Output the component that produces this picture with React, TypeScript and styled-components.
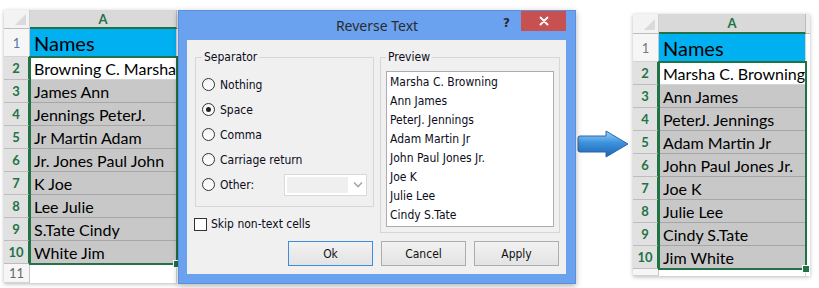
import React from 'react';
import styled, { createGlobalStyle, css } from 'styled-components';

const Global = createGlobalStyle`
  html, body { margin: 0; padding: 0; background: #fff; }
  body { width: 819px; height: 288px; overflow: hidden; font-family: "Liberation Sans", Arial, sans-serif; }
  * { box-sizing: border-box; }
`;

const Page = styled.div`
  display: flex;
  align-items: flex-start;
  width: 819px;
  height: 288px;
`;

/* ---------- Spreadsheet ---------- */

const SheetFrame = styled.div<{ $ml: number; $mt: number }>`
  display: flex;
  margin-left: ${p => p.$ml}px;
  margin-top: ${p => p.$mt}px;
  background: #fff;
  box-shadow: 0 1px 4px rgba(0, 0, 0, 0.28);
  font-family: Lato, "Open Sans", sans-serif;
`;

const HeadCol = styled.div`
  display: flex;
  flex-direction: column;
  width: 26px;
`;

const DataCol = styled.div`
  display: flex;
  flex-direction: column;
  width: 147px;
`;

const StripCol = styled.div<{ $w: number }>`
  display: flex;
  flex-direction: column;
  width: ${p => p.$w}px;
`;

const Corner = styled.div<{ $h: number }>`
  height: ${p => p.$h}px;
  background: #f3f3f3;
  border-right: 1px solid #cfcfcf;
  border-bottom: 1px solid #bdbdbd;
  display: flex;
  align-items: flex-end;
  justify-content: flex-end;
  padding: 0 3px 3px 0;
`;

const Tri = styled.div`
  width: 0;
  height: 0;
  border-left: 11px solid transparent;
  border-bottom: 11px solid #dadada;
`;

const RowNum = styled.div<{ $h: number; $sel?: boolean; $tone?: string }>`
  height: ${p => p.$h}px;
  display: flex;
  align-items: center;
  justify-content: center;
  font-size: 13px;
  border-right: 1px solid #c6c6c6;
  border-bottom: 1px solid #d4d4d4;
  background: #f6f6f6;
  color: ${p => p.$tone || '#666'};
  overflow: hidden;
  ${p =>
    p.$sel &&
    css`
      background: #e1e1e1;
      color: #217346;
      font-weight: 700;
      border-bottom-color: #bdbdbd;
      border-right: 2px solid #217346;
    `}
`;

const ColHead = styled.div<{ $h: number }>`
  height: ${p => p.$h}px;
  background: #d9d9d9;
  color: #217346;
  font-weight: 700;
  font-size: 13px;
  display: flex;
  align-items: center;
  justify-content: center;
  border-right: 1px solid #bdbdbd;
  border-bottom: 2px solid #217346;
`;

const StripHead = styled.div<{ $h: number }>`
  height: ${p => p.$h}px;
  background: #ececec;
  border-bottom: 1px solid #bdbdbd;
`;

const StripBody = styled.div`
  flex: 1;
  background: #fff;
`;

const TitleCell = styled.div`
  height: 28px;
  background: #00b0f0;
  color: #000;
  font-size: 20px;
  display: flex;
  align-items: center;
  padding-left: 4px;
  border-right: 1px solid #d4d4d4;
  white-space: nowrap;
  overflow: hidden;
`;

const Selection = styled.div`
  position: relative;
  display: flex;
  flex-direction: column;
  &::after {
    content: '';
    position: absolute;
    left: -1px;
    top: -1px;
    right: -1px;
    bottom: -1px;
    border: 2px solid #217346;
    pointer-events: none;
  }
  &::before {
    content: '';
    position: absolute;
    right: -4px;
    bottom: -4px;
    width: 6px;
    height: 6px;
    background: #217346;
    border: 1px solid #fff;
    z-index: 2;
  }
`;

const Cell = styled.div<{ $h?: number; $active?: boolean }>`
  height: ${p => p.$h ?? 23}px;
  background: ${p => (p.$active ? '#fff' : '#c8c8c8')};
  border-bottom: 1px solid ${p => (p.$active ? '#d4d4d4' : '#a6a6a6')};
  font-size: 16px;
  color: #000;
  display: flex;
  align-items: center;
  padding-left: 4px;
  white-space: nowrap;
  overflow: hidden;
`;

const EmptyCell = styled.div<{ $h: number }>`
  height: ${p => p.$h}px;
  background: #fff;
  border-right: 1px solid #d4d4d4;
`;

type SheetProps = {
  names: string[];
  ml: number;
  mt: number;
  headerH: number;
  lastH: number;
  strip: number;
  oneTone: string;
};

const Sheet: React.FC<SheetProps> = ({ names, ml, mt, headerH, lastH, strip, oneTone }) => (
  <SheetFrame $ml={ml} $mt={mt}>
    <HeadCol>
      <Corner $h={headerH}>
        <Tri />
      </Corner>
      <RowNum $h={28} $tone={oneTone}>1</RowNum>
      {names.map((_, i) => (
        <RowNum key={i} $h={23} $sel>
          {i + 2}
        </RowNum>
      ))}
      <RowNum $h={lastH}>{lastH >= 14 ? '11' : ''}</RowNum>
    </HeadCol>
    <DataCol>
      <ColHead $h={headerH}>A</ColHead>
      <TitleCell>Names</TitleCell>
      <Selection>
        {names.map((n, i) => (
          <Cell key={n} $active={i === 0}>
            {n}
          </Cell>
        ))}
      </Selection>
      <EmptyCell $h={lastH} />
    </DataCol>
    <StripCol $w={strip}>
      <StripHead $h={headerH} />
      <StripBody />
    </StripCol>
  </SheetFrame>
);

/* ---------- Dialog ---------- */

const Dialog = styled.div`
  width: 398px;
  height: 274px;
  margin-top: 10px;
  background: #6aa2f0;
  border: 1px solid #5b8fdb;
  display: flex;
  flex-direction: column;
  box-shadow: 0 2px 6px rgba(0, 0, 0, 0.3);
  position: relative;
  z-index: 3;
`;

const TitleBar = styled.div`
  height: 29px;
  display: grid;
  grid-template-columns: 1fr auto 1fr;
  align-items: start;
`;

const Title = styled.div`
  font-family: "Noto Sans", "Open Sans", sans-serif;
  font-size: 14px;
  color: #2b2b2b;
  line-height: 29px;
`;

const TitleButtons = styled.div`
  display: flex;
  justify-content: flex-end;
  align-items: flex-start;
  padding-right: 9px;
`;

const Help = styled.div`
  font-family: "DejaVu Sans", sans-serif;
  font-weight: 700;
  font-size: 12px;
  color: #2a2a2a;
  line-height: 20px;
  margin-top: 2px;
  margin-right: 11px;
`;

const Close = styled.div`
  width: 45px;
  height: 20px;
  background: #c75050;
  display: flex;
  align-items: center;
  justify-content: center;
`;

const Client = styled.div`
  flex: 1;
  margin: 0 9px 9px 8px;
  background: #f0f0f0;
  display: flex;
  flex-direction: column;
  padding: 10px 6px 8px 8px;
  font-family: "DejaVu Sans Condensed", "Liberation Sans", sans-serif;
  font-size: 12px;
  color: #0b0b1a;
`;

const TopArea = styled.div`
  display: flex;
  gap: 6px;
`;

const LeftCol = styled.div`
  width: 180px;
  display: flex;
  flex-direction: column;
`;

const Group = styled.fieldset<{ $pad: string }>`
  margin: 0;
  border: 1px solid #d6d6d6;
  padding: ${p => p.$pad};
  min-width: 0;
`;

const Legend = styled.legend`
  padding: 0 2px;
  line-height: 14px;
  margin-left: 0;
`;

const OptionRow = styled.div`
  height: 25px;
  display: flex;
  align-items: center;
  gap: 5px;
`;

const Radio = styled.span<{ $on?: boolean }>`
  width: 13px;
  height: 13px;
  border-radius: 50%;
  border: 1px solid #333;
  background: linear-gradient(#f4f4f4, #ffffff);
  display: flex;
  align-items: center;
  justify-content: center;
  flex: none;
  &::after {
    content: '';
    width: 5px;
    height: 5px;
    border-radius: 50%;
    background: ${p => (p.$on ? '#222' : 'transparent')};
  }
`;

const Dropdown = styled.div`
  margin-left: auto;
  width: 83px;
  height: 22px;
  border: 1px solid #d9d9d9;
  background: #fff;
  display: flex;
  align-items: center;
  padding: 2px;
  gap: 5px;
`;

const DropField = styled.div`
  width: 61px;
  height: 100%;
  background: #efefef;
`;

const CheckRow = styled.div`
  display: flex;
  align-items: center;
  gap: 4px;
  margin-top: 10px;
  margin-left: -1px;
`;

const Check = styled.span`
  width: 13px;
  height: 13px;
  border: 1px solid #333;
  background: #fff;
  flex: none;
`;

const RightCol = styled.div`
  width: 181px;
`;

const ListBox = styled.div`
  height: 156px;
  border: 1px solid #abadb3;
  background: #fff;
  display: flex;
  flex-direction: column;
  padding-top: 1px;
`;

const ListItem = styled.div`
  height: 19px;
  line-height: 19px;
  padding-left: 3px;
  white-space: nowrap;
`;

const ButtonRow = styled.div`
  display: flex;
  justify-content: flex-end;
  gap: 8px;
  margin-top: auto;
  padding-right: 1px;
`;

const Button = styled.div<{ $primary?: boolean }>`
  width: 85px;
  height: 25px;
  border: 1px solid ${p => (p.$primary ? '#3c8ce0' : '#adadad')};
  background: linear-gradient(#f2f2f2, #e3e3e3);
  display: flex;
  align-items: center;
  justify-content: center;
  font-size: 12px;
  color: #111;
`;

const ArrowBox = styled.div`
  margin-left: 1px;
  margin-top: 130px;
  width: 52px;
  height: 28px;
`;

const leftNames = [
  'Browning C. Marsha',
  'James Ann',
  'Jennings PeterJ.',
  'Jr Martin Adam',
  'Jr. Jones Paul John',
  'K Joe',
  'Lee Julie',
  'S.Tate Cindy',
  'White Jim',
];

const rightNames = [
  'Marsha C. Browning',
  'Ann James',
  'PeterJ. Jennings',
  'Adam Martin Jr',
  'John Paul Jones Jr.',
  'Joe K',
  'Julie Lee',
  'Cindy S.Tate',
  'Jim White',
];

const options = ['Nothing', 'Space', 'Comma', 'Carriage return'];

export default function App() {
  return (
    <>
      <Global />
      <Page>
        <Sheet names={leftNames} ml={4} mt={10} headerH={19} lastH={19} strip={1} oneTone="#5577a6" />
        <Dialog>
          <TitleBar>
            <span />
            <Title>Reverse Text</Title>
            <TitleButtons>
              <Help>?</Help>
              <Close>
                <svg width="10" height="10" viewBox="0 0 10 10">
                  <path d="M1.5 1.5 L8.5 8.5 M8.5 1.5 L1.5 8.5" stroke="#fff" strokeWidth="1.8" strokeLinecap="round" />
                </svg>
              </Close>
            </TitleButtons>
          </TitleBar>
          <Client>
            <TopArea>
              <LeftCol>
                <Group $pad="8px 6px 9px 6px">
                  <Legend>Separator</Legend>
                  {options.map(o => (
                    <OptionRow key={o}>
                      <Radio $on={o === 'Space'} />
                      {o}
                    </OptionRow>
                  ))}
                  <OptionRow>
                    <Radio />
                    Other:
                    <Dropdown>
                      <DropField />
                      <svg width="10" height="7" viewBox="0 0 10 7">
                        <path d="M1 1.5 L5 5.5 L9 1.5" stroke="#a8a8a8" strokeWidth="1.6" fill="none" />
                      </svg>
                    </Dropdown>
                  </OptionRow>
                </Group>
                <CheckRow>
                  <Check />
                  Skip non-text cells
                </CheckRow>
              </LeftCol>
              <RightCol>
                <Group $pad="7px 5px 5px 5px">
                  <Legend>Preview</Legend>
                  <ListBox>
                    {rightNames.slice(0, 8).map(n => (
                      <ListItem key={n}>{n}</ListItem>
                    ))}
                  </ListBox>
                </Group>
              </RightCol>
            </TopArea>
            <ButtonRow>
              <Button $primary>Ok</Button>
              <Button>Cancel</Button>
              <Button>Apply</Button>
            </ButtonRow>
          </Client>
        </Dialog>
        <ArrowBox>
          <svg width="52" height="28" viewBox="0 0 52 28">
            <defs>
              <linearGradient id="arrowGrad" x1="0" y1="0" x2="0" y2="1">
                <stop offset="0" stopColor="#9ad2f7" />
                <stop offset="0.45" stopColor="#3d93de" />
                <stop offset="1" stopColor="#1d62b0" />
              </linearGradient>
            </defs>
            <path
              d="M3 6 L29 6 L29 1 L51 14 L29 27 L29 22 L3 22 Q1 22 1 20 L1 8 Q1 6 3 6 Z"
              fill="url(#arrowGrad)"
              stroke="#2c67ad"
              strokeWidth="1"
              strokeLinejoin="round"
            />
          </svg>
        </ArrowBox>
        <Sheet names={rightNames} ml={4} mt={14} headerH={20} lastH={7} strip={4} oneTone="#777" />
      </Page>
    </>
  );
}
